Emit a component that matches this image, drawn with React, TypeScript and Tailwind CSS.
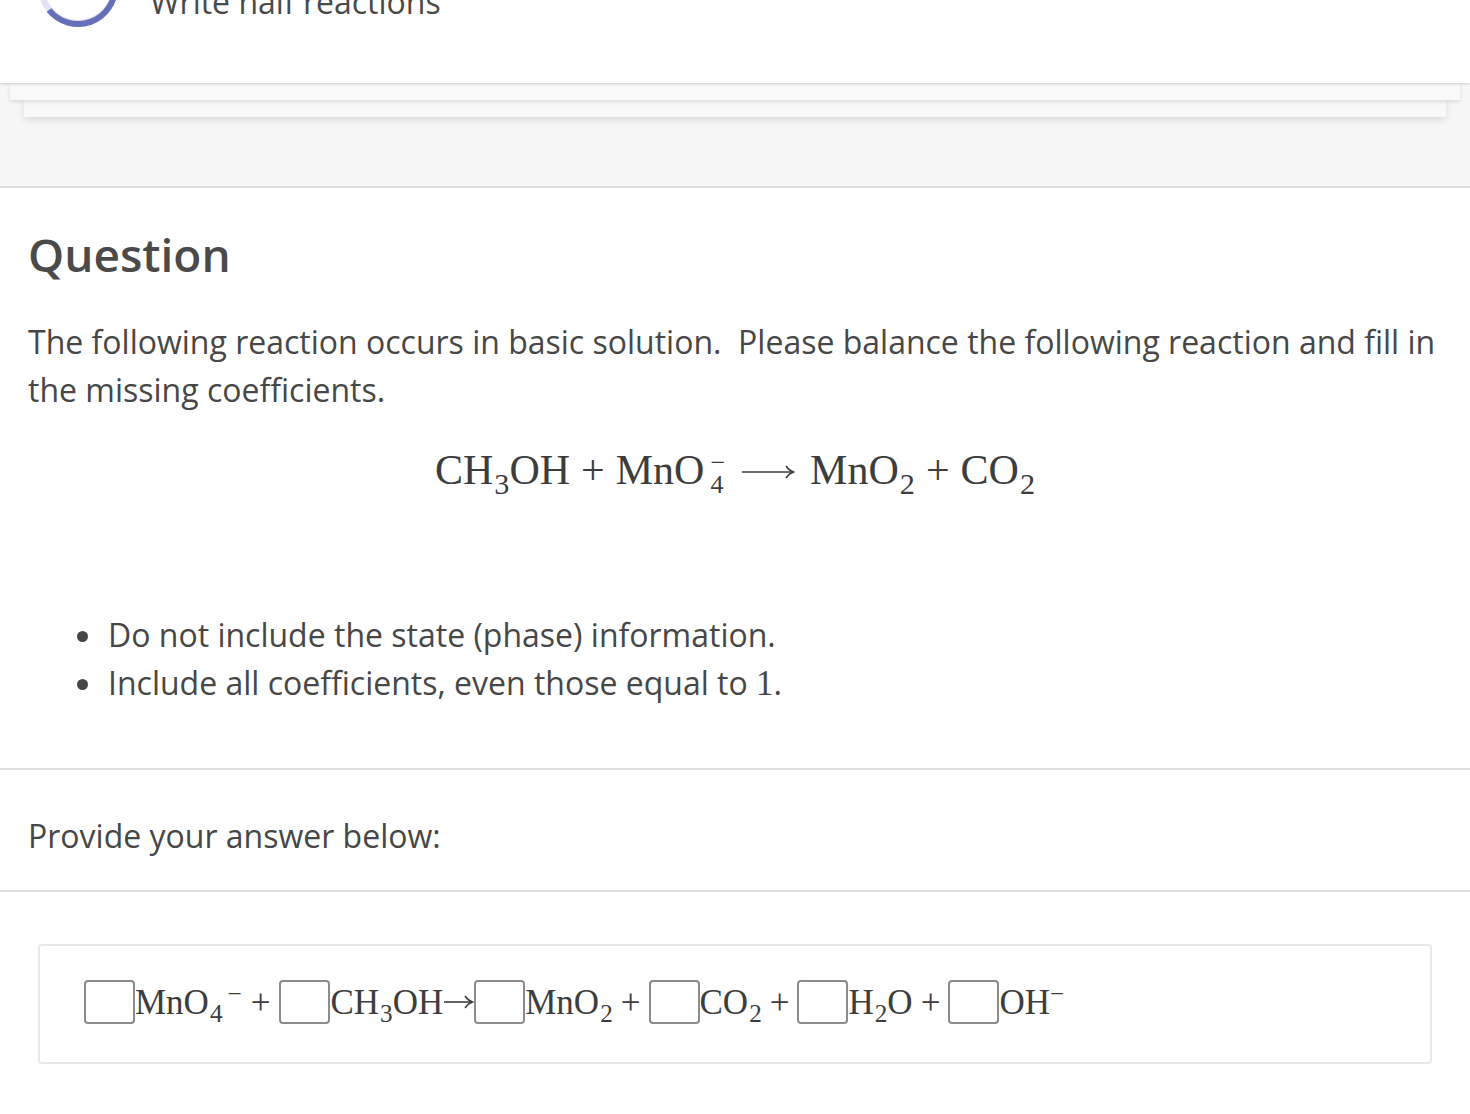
import React from 'react';

const serif = { fontFamily: '"Liberation Serif", "DejaVu Serif", serif' };

function Ring() {
  return (
    <svg width="84" height="84" viewBox="0 0 84 84" className="shrink-0">
      <circle cx="42" cy="42" r="37" fill="none" stroke="#e1e3f4" strokeWidth="6" />
      <path d="M 13 66 A 37 37 0 0 0 79 42" fill="none" stroke="#6670b8" strokeWidth="6" />
    </svg>
  );
}

function Arrow({ w, className = '' }: { w: number; className?: string }) {
  return (
    <svg width={w} height="16" viewBox={`0 0 ${w} 16`} className={`inline-block shrink-0 ${className}`}>
      <path d={`M 1 8 H ${w - 2}`} stroke="#3d3d3d" strokeWidth="1.6" fill="none" />
      <path d={`M ${w - 9} 2 Q ${w - 6} 6.5 ${w - 1.5} 8 Q ${w - 6} 9.5 ${w - 9} 14`} stroke="#3d3d3d" strokeWidth="1.5" fill="none" />
    </svg>
  );
}

function Box() {
  return <span className="inline-block w-[51px] h-[44px] border-2 border-[#8c8c8c] rounded-[4px] bg-white shrink-0" />;
}

function Sub({ children }: { children: React.ReactNode }) {
  return <span className="relative top-[0.32em] text-[0.72em] leading-none ml-[1px]">{children}</span>;
}

export default function App() {
  return (
    <div className="w-[1470px] min-h-[1114px] bg-white text-[#474747]" style={{ fontFamily: '"Open Sans", "Noto Sans", sans-serif' }}>
      {/* header */}
      <div className="relative z-10 h-[83px] overflow-hidden bg-white shadow-[0_1px_3px_rgba(0,0,0,0.18)]">
        <div className="flex items-start gap-[30px] pl-[36px] -mt-[56px]">
          <Ring />
          <div className="mt-[38px] text-[32px] leading-[40px] text-[#4a4a4a]">Write half reactions</div>
        </div>
      </div>

      {/* stacked cards */}
      <div className="h-[105px] bg-[#f7f7f7] border-b-2 border-[#dedede]">
        <div className="mx-[10px] h-[17px] bg-[#f9f9f9] shadow-[0_2px_4px_rgba(0,0,0,0.12)] relative z-[2]" />
        <div className="mx-[24px] h-[17px] bg-[#f9f9f9] shadow-[0_3px_8px_rgba(0,0,0,0.12)] relative z-[1]" />
      </div>

      {/* question */}
      <div className="px-[28px] pt-[36px]">
        <h2 className="text-[46px] leading-[60px] font-semibold text-[#4a4a4a]">Question</h2>
        <p className="mt-[34px] text-[32px] leading-[48px] -mr-[8px]">
          The following reaction occurs in basic solution.&nbsp; Please balance the following reaction and fill in the missing coefficients.
        </p>
        <div className="flex justify-center mt-[26px] text-[42px] leading-[60px] text-[#3d3d3d]" style={serif}>
          <span className="flex items-center">
            <span>
              CH<Sub>3</Sub>OH
            </span>
            <span className="mx-[11px]">+</span>
            <span>MnO</span>
            <span className="inline-flex flex-col text-[0.62em] leading-none ml-[6px] mt-[8px]">
              <span className="h-[22px]">−</span>
              <span>4</span>
            </span>
            <Arrow w={54} className="ml-[16px] mr-[15px] mt-[4px]" />
            <span>
              MnO<Sub>2</Sub>
            </span>
            <span className="mx-[11px]">+</span>
            <span>
              CO<Sub>2</Sub>
            </span>
          </span>
        </div>

        <ul className="mt-[111px] pl-[78px] list-disc text-[32px] leading-[48px] marker:text-[#474747]">
          <li className="pl-[2px]">Do not include the state (phase) information.</li>
          <li className="pl-[2px]">
            Include all coefficients, even those equal to <span style={serif} className="text-[35px]">1</span>.
          </li>
        </ul>
      </div>

      <div className="mt-[60px] border-t-2 border-[#e0e0e0]" />
      <div className="px-[28px] h-[120px] flex items-center pt-[12px] text-[32px]">Provide your answer below:</div>
      <div className="border-t-2 border-[#e0e0e0]" />

      {/* answer */}
      <div className="px-[38px] pt-[52px]">
        <div className="w-[1394px] h-[120px] border-2 border-[#e8e8e8] rounded-[4px] flex items-center pl-[44px] pb-[4px]">
          <div className="flex items-center text-[35px] leading-none text-[#3d3d3d]" style={serif}>
            <Box />
            <span>
              MnO<Sub>4</Sub>
              <span className="relative -top-[0.45em] text-[0.72em] ml-[5px]">−</span>
            </span>
            <span className="mx-[9px]">+</span>
            <Box />
            <span>
              CH<Sub>3</Sub>OH
            </span>
            <Arrow w={31} />
            <Box />
            <span>
              MnO<Sub>2</Sub>
            </span>
            <span className="mx-[8px]">+</span>
            <Box />
            <span>
              CO<Sub>2</Sub>
            </span>
            <span className="mx-[8px]">+</span>
            <Box />
            <span>
              H<Sub>2</Sub>O
            </span>
            <span className="mx-[8px]">+</span>
            <Box />
            <span>
              OH<span className="relative -top-[0.45em] text-[0.72em]">−</span>
            </span>
          </div>
        </div>
      </div>
    </div>
  );
}
